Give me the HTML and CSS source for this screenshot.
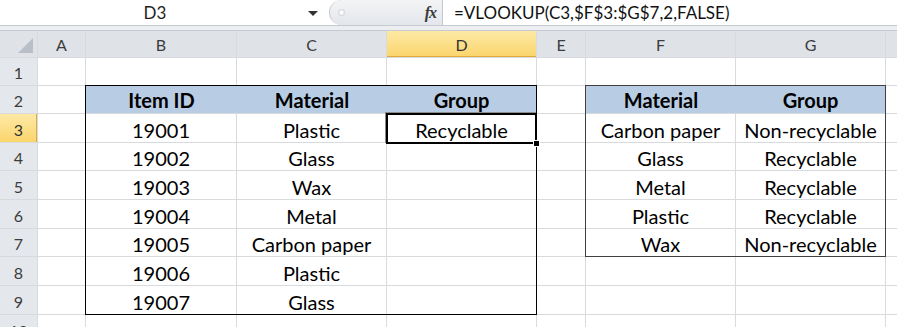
FILE: index.html
```html
<!DOCTYPE html>
<html lang="en">
  <head>
    <meta charset="UTF-8" />
    <meta name="viewport" content="width=device-width, initial-scale=1.0" />
    <title>VLOOKUP</title>
    <link rel="stylesheet" href="styles.css">
  </head>

  <body>
    <!-- formula bar -->
    <div class="formula-bar">
      <div class="name-box">D3</div>
      <div class="name-arrow"></div>
      <div class="fx-box">
        <span class="grip"></span>
        <span class="fx">fx</span>
      </div>
      <div class="formula">=VLOOKUP(C3,$F$3:$G$7,2,FALSE)</div>
    </div>
    <div class="bar-band"></div>

    <div class="sheet">
      <!-- cells -->
      <div class="grid cells">
        <div class="corner"></div>
        <div class="hd">A</div><div class="hd">B</div><div class="hd">C</div><div class="hd on">D</div>
        <div class="hd">E</div><div class="hd">F</div><div class="hd">G</div><div class="hd"></div>

        <div class="rh">1</div>
        <div class="c"></div><div class="c"></div><div class="c"></div><div class="c"></div>
        <div class="c"></div><div class="c"></div><div class="c"></div><div class="c"></div>

        <div class="rh">2</div>
        <div class="c"></div><div class="c"></div><div class="c"></div><div class="c"></div>
        <div class="c"></div><div class="c"></div><div class="c"></div><div class="c"></div>

        <div class="rh on">3</div>
        <div class="c"></div><div class="c">19001</div><div class="c">Plastic</div><div class="c">Recyclable</div>
        <div class="c"></div><div class="c">Carbon paper</div><div class="c">Non-recyclable</div><div class="c"></div>

        <div class="rh">4</div>
        <div class="c"></div><div class="c">19002</div><div class="c">Glass</div><div class="c"></div>
        <div class="c"></div><div class="c">Glass</div><div class="c">Recyclable</div><div class="c"></div>

        <div class="rh">5</div>
        <div class="c"></div><div class="c">19003</div><div class="c">Wax</div><div class="c"></div>
        <div class="c"></div><div class="c">Metal</div><div class="c">Recyclable</div><div class="c"></div>

        <div class="rh">6</div>
        <div class="c"></div><div class="c">19004</div><div class="c">Metal</div><div class="c"></div>
        <div class="c"></div><div class="c">Plastic</div><div class="c">Recyclable</div><div class="c"></div>

        <div class="rh">7</div>
        <div class="c"></div><div class="c">19005</div><div class="c">Carbon paper</div><div class="c"></div>
        <div class="c"></div><div class="c">Wax</div><div class="c">Non-recyclable</div><div class="c"></div>

        <div class="rh">8</div>
        <div class="c"></div><div class="c">19006</div><div class="c">Plastic</div><div class="c"></div>
        <div class="c"></div><div class="c"></div><div class="c"></div><div class="c"></div>

        <div class="rh">9</div>
        <div class="c"></div><div class="c">19007</div><div class="c">Glass</div><div class="c"></div>
        <div class="c"></div><div class="c"></div><div class="c"></div><div class="c"></div>

        <div class="rh">10</div>
        <div class="c"></div><div class="c"></div><div class="c"></div><div class="c"></div>
        <div class="c"></div><div class="c"></div><div class="c"></div><div class="c"></div>
      </div>

      <!-- fills, borders, selection -->
      <div class="grid marks">
        <div class="band band-left">
          <span>Item ID</span><span>Material</span><span>Group</span>
        </div>
        <div class="band band-right">
          <span>Material</span><span>Group</span>
        </div>
        <div class="box box-left"></div>
        <div class="box box-right"></div>
        <div class="selection"></div>
      </div>
    </div>
  </body>
</html>
```

FILE: styles.css
```css
html,
body {
  margin: 0;
  overflow: hidden;
  background: #fff;
}

body {
  font-family: Lato, "Liberation Sans", sans-serif;
  color: #000;
}

/* formula bar */
.formula-bar {
  display: flex;
  height: 25px;
  border-bottom: 1px solid #c5cad1;
  background: #fff;
}

.name-box {
  width: 310px;
  text-align: center;
  font-size: 17px;
  line-height: 26px;
  color: #1e1e1e;
}

.name-arrow {
  width: 0;
  height: 0;
  margin: 11px 9px 0 -2px;
  border-top: 5px solid #333;
  border-left: 5px solid transparent;
  border-right: 5px solid transparent;
}

.fx-box {
  display: flex;
  align-items: center;
  justify-content: space-between;
  width: 98px;
  margin-left: 2px;
  padding: 0 6px 0 8px;
  border: 1px solid #c3c8ce;
  border-top: none;
  border-bottom: none;
  border-radius: 13px 0 0 13px;
  background: linear-gradient(#f3f4f6, #e3e6ea);
}

.grip {
  width: 7px;
  height: 7px;
  border-radius: 50%;
  background: radial-gradient(#fff 20%, #c9cdd2 80%);
}

.fx {
  font-family: "Liberation Serif", serif;
  font-style: italic;
  font-weight: bold;
  font-size: 16px;
  letter-spacing: -1px;
  color: #3a3a3a;
}

.formula {
  padding-left: 11px;
  font-size: 17px;
  line-height: 26px;
  color: #111;
}

.bar-band {
  height: 4px;
  background: #eceef1;
  border-bottom: 1px solid #c5cad1;
}

/* sheet */
.sheet {
  display: grid;
}

.grid {
  grid-area: 1 / 1;
  display: grid;
  grid-template-columns: 37px 47px 150px 149px 149px 48px 149px 149px 1fr;
  grid-template-rows: 26px 27px 27px 28px 27px 28px 28px 27px 28px 28px 28px;
  gap: 1px;
}

.cells {
  background: #d8dadd;
}

.corner {
  position: relative;
  background: #dfe3e8;
}

.corner::after {
  content: "";
  position: absolute;
  right: 4px;
  bottom: 4px;
  width: 15px;
  height: 15px;
  background: #b8bfc7;
  clip-path: polygon(100% 0, 100% 100%, 0 100%);
}

.hd,
.rh {
  display: flex;
  justify-content: center;
  font-size: 16px;
  color: #3c3c3c;
  background: #dfe3e8;
}

.hd {
  align-items: center;
}

.rh {
  align-items: flex-end;
  line-height: 24px;
  background: #e4e7eb;
}

.hd.on,
.rh.on {
  background: linear-gradient(#fde9a6, #fbd56c);
  color: #333;
}

.hd.on {
  box-shadow: inset 0 -1px 0 #e3a93c;
}

.rh.on {
  box-shadow: inset -1px 0 0 #e3a93c;
}

.c {
  display: flex;
  justify-content: center;
  align-items: flex-end;
  font-size: 20px;
  line-height: 24px;
  white-space: nowrap;
  background: #fff;
}

/* overlays */
.marks {
  pointer-events: none;
}

.band {
  display: grid;
  align-items: end;
  justify-items: center;
  font-size: 20px;
  font-weight: bold;
  line-height: 25px;
  background: #b8cce4;
}

.band-left {
  grid-column: 3 / 6;
  grid-row: 3;
  grid-template-columns: 151px 150px 1fr;
}

.band-right {
  grid-column: 7 / 9;
  grid-row: 3;
  grid-template-columns: 150px 1fr;
}

.box {
  margin: -1px;
  border: 1px solid #000;
}

.box-left {
  grid-column: 3 / 6;
  grid-row: 3 / 11;
}

.box-right {
  grid-column: 7 / 9;
  grid-row: 3 / 9;
  border-color: #404040;
}

.selection {
  grid-column: 5;
  grid-row: 4;
  position: relative;
  margin: -1px -1px -2px -1px;
  border: 2px solid #000;
  box-shadow: -1px -1px 0 #8a8a8a;
}

/* fill handle */
.selection::after {
  content: "";
  position: absolute;
  right: -5px;
  bottom: -5px;
  width: 5px;
  height: 5px;
  background: #000;
  border: 1px solid #fff;
}
```
